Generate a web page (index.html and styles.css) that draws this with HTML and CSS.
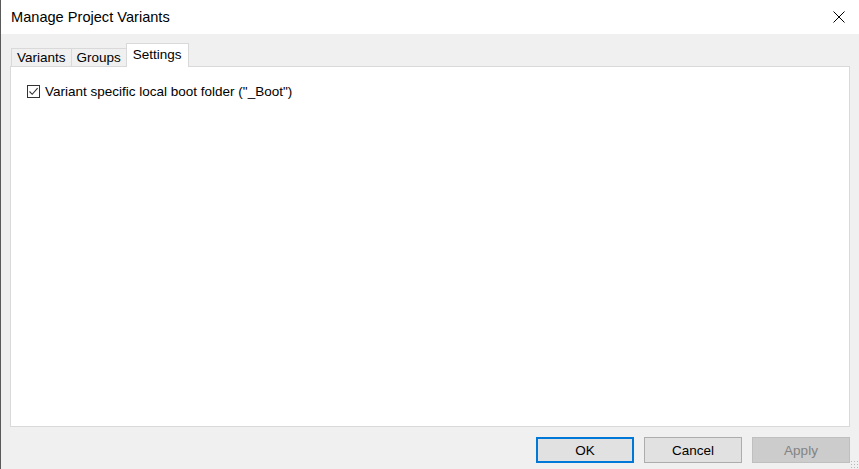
FILE: index.html
```html
<!DOCTYPE html>
<html lang="en">
<head>
    <meta charset="UTF-8">
    <meta name="viewport" content="width=device-width, initial-scale=1.0">
    <title>Manage Project Variants</title>
    <link rel="stylesheet" href="styles.css">
</head>
<body>
    <div class="window">
        <div class="titlebar">
            <span class="title">Manage Project Variants</span>
            <svg class="close" width="12" height="12" viewBox="0 0 12 12">
                <path d="M0.5 0.5 L11.5 11.5 M11.5 0.5 L0.5 11.5" stroke="#000" stroke-width="1" fill="none"/>
            </svg>
        </div>

        <div class="content">
            <div class="tabs">
                <div class="tab">Variants</div>
                <div class="tab">Groups</div>
                <div class="tab active">Settings</div>
            </div>
            <div class="tab-panel">
                <label class="check-row">
                    <span class="checkbox">
                        <svg width="11" height="11" viewBox="0 0 11 11">
                            <path d="M1.5 5.5 L4.2 8.3 L9.6 2.2" stroke="#333" stroke-width="1.1" fill="none"/>
                        </svg>
                    </span>
                    Variant specific local boot folder ("_Boot")
                </label>
            </div>

            <div class="buttons">
                <button type="button" class="btn default">OK</button>
                <button type="button" class="btn">Cancel</button>
                <button type="button" class="btn disabled">Apply</button>
            </div>
        </div>
        <div class="grip"></div>
    </div>
</body>
</html>
```

FILE: styles.css
```css
*, *::after, *::before {
    box-sizing: border-box;
}

body {
    margin: 0;
    font-family: 'Segoe UI', 'Liberation Sans', Arial, sans-serif;
    font-size: 13.5px;
    color: #000;
}

.window {
    position: relative;
    width: 859px;
    height: 469px;
    background-color: #f0f0f0;
    border-left: 1px solid #5a5a5a;
    display: flex;
    flex-direction: column;
}

.titlebar {
    height: 34px;
    background-color: #fff;
    display: flex;
    align-items: center;
    justify-content: space-between;
    padding: 0 14px 0 10px;
}
.title {
    font-size: 14.6px;
}

.content {
    padding: 9px 9px 0 9px;
    display: flex;
    flex-direction: column;
}

.tabs {
    display: flex;
    align-items: flex-end;
    height: 23px;
    padding-left: 1px;
}
.tab {
    height: 18px;
    padding: 0 5px;
    border: 1px solid #d9d9d9;
    border-bottom: none;
    border-right: none;
    display: flex;
    align-items: center;
    background-color: #f0f0f0;
}
.tab.active {
    height: 24px;
    margin-bottom: -1px;
    background-color: #fff;
    border-right: 1px solid #d9d9d9;
    position: relative;
    z-index: 1;
    padding: 0 6px 2px;
}

.tab-panel {
    height: 361px;
    background-color: #fff;
    border: 1px solid #d9d9d9;
    padding: 17px 16px;
}

.check-row {
    display: flex;
    align-items: center;
    gap: 5px;
}
.checkbox {
    width: 13px;
    height: 13px;
    border: 1px solid #333;
    display: flex;
    align-items: center;
    justify-content: center;
}

.buttons {
    display: flex;
    justify-content: flex-end;
    gap: 10px;
    margin-top: 10px;
}
.btn {
    width: 98px;
    height: 26px;
    font-family: inherit;
    font-size: 13.5px;
    background-color: #e1e1e1;
    border: 1px solid #adadad;
    color: #000;
    padding: 0;
}
.btn.default {
    border: 2px solid #0078d7;
}
.btn.disabled {
    background-color: #cccccc;
    border-color: #bfbfbf;
    color: #838383;
}

.grip {
    position: absolute;
    right: 1px;
    bottom: 1px;
    width: 8px;
    height: 8px;
    background-image: radial-gradient(#b9b9b9 1px, transparent 1px);
    background-size: 3px 3px;
}
```
